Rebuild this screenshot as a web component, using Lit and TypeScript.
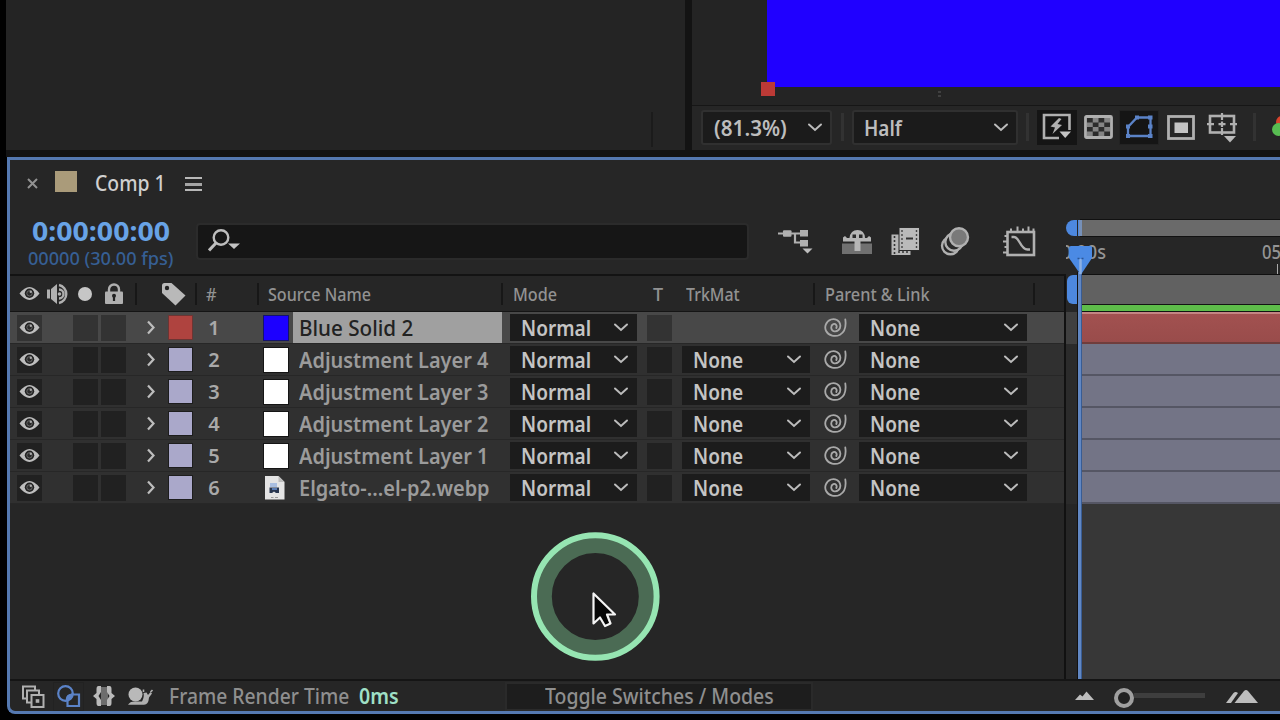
import { LitElement, html, svg, css } from "lit";
import { customElement, property } from "lit/decorators.js";
import { classMap } from "lit/directives/class-map.js";
import { styleMap } from "lit/directives/style-map.js";

/** A single line of text condensed or widened to an exact width. */
@customElement("fit-text")
class FitText extends LitElement {
  @property({ type: Number }) w = 100;
  @property() text = "";
  static styles = css`
    :host { display: block; white-space: nowrap; flex: none; text-align: left; }
    .t { display: inline-block; transform-origin: 0 50%; white-space: pre; }
  `;
  async updated() {
    await document.fonts.ready;
    const t = this.renderRoot.querySelector(".t") as HTMLElement;
    this.style.width = `${this.w}px`;
    t.style.transform = `scaleX(${this.w / t.offsetWidth})`;
  }
  render() {
    return html`<span class="t">${this.text}</span>`;
  }
}

const ft = (text: string, w: number) => html`<fit-text .text=${text} .w=${w}></fit-text>`;
const icon = (w: number, h: number, body: unknown) =>
  html`<svg width=${w} height=${h} viewBox="0 0 ${w} ${h}" fill="none">${body}</svg>`;

const G = "#b0b0b0";
const eye = icon(22, 16, svg`<path d="M0.500 7.500Q5.500 1 10.500 1T20.500 7.500Q15.500 14 10.500 14T0.500 7.500Z" fill="#bdbdbd"/><circle cx="10.500" cy="7.300" r="4.700" fill="#222"/><circle cx="10.500" cy="7.300" r="2.700" fill="#2a2a2a" stroke="#777" stroke-width="0.800"/><circle cx="11.800" cy="5.800" r="1.200" fill="#aaa"/>`);
const speaker = icon(24, 22, svg`<path d="M1 6.500H4V15.500H1ZM5 6L11 1V21L5 16Z" fill=${G}/><path d="M13 6.500A4.500 4.500 0 0 1 13 15.500M13 2A9.200 9.200 0 0 1 13 20" stroke=${G} stroke-width="2.400"/><circle cx="13.500" cy="11" r="1.800" fill=${G}/>`);
const lock = icon(20, 22, svg`<path d="M5 10V6.500A5 5 0 0 1 15 6.500V10" stroke=${G} stroke-width="2.400"/><rect x="1" y="8.500" width="18" height="12.500" rx="1" fill=${G}/><path d="M10 12V18" stroke="#222" stroke-width="2.200"/><circle cx="10" cy="12.800" r="2" fill="#222"/>`);
const tag = icon(26, 24, svg`<path d="M1 3.500Q1 1 3.500 1H10.500L24.500 13.500L14.500 23.500L1 11Z" fill="#b9b9b9"/><circle cx="6" cy="6" r="2.200" fill="#222"/>`);
const chevD = icon(16, 9, svg`<path d="M2 1.500L8 7L14 1.500" stroke="#bcbcbc" stroke-width="2" stroke-linecap="round"/>`);
const chevR = icon(10, 15, svg`<path d="M2 1.500L7.500 7.500L2 13.500" stroke="#bdbdbd" stroke-width="2.200"/>`);
const spiral = icon(24, 22, svg`<path d="M13.300 11C14.500 8.500 12.500 6.300 10.300 7.100C7.500 8.200 7.500 13 10.500 14.100C14.300 15.300 17.800 12 17.300 8C16.700 3.500 12 1.100 8 2.500C3 4.200 1 10 3.100 14C5.500 18.700 12 20.300 17 17.700C21.800 15.100 23.200 9 22.300 2.500" stroke="#a9a9a9" stroke-width="1.800" stroke-linecap="round"/>`);
const webp = icon(20, 25, svg`<path d="M0 1H13.500L19.500 7V24.500H0Z" fill="#e4e4e4"/><path d="M13.500 1V7H19.500Z" fill="#bcbcbc"/><path d="M5 8H12V12H5Z" fill="#a9bee0"/><path d="M4.500 12.500H14V18H11L9 16.500L7 18H4.500Z" fill="#28364f"/><path d="M7 14H12" stroke="#6a93d5" stroke-width="1.500"/><path d="M6 22.500H8.500M10 22.500H13" stroke="#9a9a9a" stroke-width="1.200"/>`);

const fastPrev = icon(30, 28, svg`<path d="M17 25H2V2H27.500V17" stroke=${G} stroke-width="2.600"/><path d="M17 5L8.500 13.500L13 14.500L10.500 21L20 12L15.500 11L19.500 6Z" fill=${G}/><path d="M17.500 18.500H29L23.200 25Z" fill="#c4c4c4"/>`);
const checker = icon(29, 24, svg`<rect x="1.500" y="1.500" width="26" height="21" rx="1" fill="#2c2c2c" stroke=${G} stroke-width="2.800"/>${[0, 1, 2, 3].flatMap((r) => [0, 1, 2, 3].filter((c) => (r + c) % 2 === 1).map((c) => svg`<rect x=${3 + c * 5.75} y=${3 + r * 4.5} width="5.750" height="4.500" fill="#858585"/>`))}`);
const maskIc = icon(29, 26, svg`<g stroke="#5b83c8" stroke-width="2.300"><path d="M12 3.500H25.500V22H3V13Z"/></g><g fill="#5b83c8"><rect x="10" y="1.500" width="4" height="4"/><rect x="23" y="1.500" width="4.500" height="4"/><rect x="23" y="10.500" width="4.500" height="4"/><rect x="23" y="20" width="4.500" height="4"/><rect x="1" y="20" width="4" height="4"/><rect x="1" y="10.500" width="4" height="4"/></g>`);
const region = icon(28, 25, svg`<rect x="1.500" y="1.500" width="25" height="22" stroke=${G} stroke-width="2.800"/><rect x="7.500" y="7.500" width="13.500" height="10.500" fill="#c4c4c4"/>`);
const guides = icon(30, 30, svg`<rect x="3" y="3" width="24" height="16.500" stroke=${G} stroke-width="2.600"/><path d="M15 0V7M15 15V22M0 11.200H7M23 11.200H30M11.500 11.200H18.500M15 8.500V14" stroke=${G} stroke-width="2.200"/><path d="M17 23H29L23 29.500Z" fill="#b9b9b9"/>`);
const rgb = icon(14, 28, svg`<circle cx="11" cy="9" r="6" fill="#d8432c"/><circle cx="7.500" cy="16.500" r="6.500" fill="#58bd52"/>`);

const flow = icon(35, 26, svg`<path d="M0 5.500H30M17 5.500V14.500H24" stroke=${G} stroke-width="2.200"/><rect x="5" y="2.200" width="8.500" height="6.500" rx="1" fill=${G}/><rect x="22" y="2" width="8" height="6.500" fill=${G}/><rect x="22" y="12" width="8" height="6.500" fill=${G}/><path d="M24.500 20.500H34.500L29.500 25.500Z" fill="#bdbdbd"/>`);
const draft = icon(30, 27, svg`<rect x="0" y="15.500" width="30" height="10.500" fill="#707070"/><path d="M1 13.500V9.500L3 8L5 10H7.500Q8.500 2 15.500 2T23 10H25L27 8L29 9.500V13.500H18.500V23H12.500V13.500Z" fill="#b5b5b5"/><rect x="10.500" y="6.500" width="3.500" height="3.500" fill="#292929"/><rect x="17" y="6.500" width="3.500" height="3.500" fill="#292929"/>`);
const blend = icon(29, 29, svg`<rect x="0.500" y="7.500" width="19" height="20.500" fill="#b5b5b5"/><path d="M3.500 9V27M17 25H5" stroke="#333" stroke-width="1.600" stroke-dasharray="2 2"/><rect x="8" y="0.500" width="20.500" height="23" fill="#bababa" stroke="#292929" stroke-width="1"/><path d="M11 3V22M25.500 3V22" stroke="#444" stroke-width="1.400" stroke-dasharray="2 2"/><path d="M15 11.500H22" stroke="#333" stroke-width="1.800"/>`);
const motion = icon(30, 29, svg`<g stroke="#b0b0b0" stroke-width="2.400"><circle cx="10.500" cy="18.800" r="8.500" fill="#292929"/><circle cx="14" cy="15" r="8.700" fill="#292929"/><circle cx="19" cy="10.300" r="9" fill="#797979"/></g>`);
const graph = icon(33, 31, svg`<rect x="4.500" y="6" width="26.500" height="23" stroke=${G} stroke-width="2.600"/><path d="M8 2.500V5M14.500 0.500V5M20 2.500V5M25.500 0.500V5M30.500 2.500V5M1.500 10H4M0 15.500H4M1.500 21H4M0 26.500H4" stroke=${G} stroke-width="2"/><path d="M8.500 11H11C17 11 17 23.500 24.500 23.500H27" stroke=${G} stroke-width="2.400"/>`);

const layersIc = icon(23, 23, svg`<g stroke=${G} stroke-width="2" fill="#242424"><rect x="1" y="1.500" width="12" height="12"/><rect x="5" y="5.500" width="12" height="12"/><rect x="9.500" y="10" width="12" height="12"/></g><rect x="13.700" y="14.200" width="3.600" height="3.600" fill=${G}/>`);
const shapesIc = icon(24, 23, svg`<circle cx="8.500" cy="8.500" r="7.300" stroke="#5b83c8" stroke-width="2.200"/><path d="M14 9.500H22V21H10.500V15" stroke="#5b83c8" stroke-width="2.200"/><path d="M8.500 15.500Q8.500 8.500 15.500 8.500Q15.500 15.500 8.500 15.500Z" fill="#5b83c8"/>`);
const bracesIc = icon(24, 22, svg`<rect x="9" y="2" width="7" height="18" fill="#6d6d6d"/><path d="M9 1H6.500Q4.500 1 4.500 4V8L1 11L4.500 14V18Q4.500 21 6.500 21H9V15L6.500 11L9 7ZM15 1H17.500Q19.500 1 19.500 4V8L23 11L19.500 14V18Q19.500 21 17.500 21H15V15L17.500 11L15 7Z" fill="#bababa"/>`);
const snailIc = icon(25, 19, svg`<circle cx="7.500" cy="7.500" r="7" fill="#b9b9b9"/><path d="M0 17.800Q2 14 8 14.500H14Q16.500 10 15.500 6L18.500 5.500L20 8L22.500 5L24 6.500L21 10.500Q20.500 17.800 16 17.800Z" fill="#b0b0b0"/><path d="M15.500 5V2.500M22.500 5L24.500 3" stroke="#b0b0b0" stroke-width="1.600"/>`);
const smallMt = icon(19, 10, svg`<path d="M0 9L5 3.500L7.500 5.500L11.500 0.500L19 9Z" fill="#bdbdbd"/>`);
const bigMt = icon(32, 15, svg`<path d="M0 14L7.500 4Q9.500 2 12 4L5 14Z" fill="#bdbdbd"/><path d="M8.500 14L18 2Q20 0 22 2L32 14Z" fill="#bdbdbd"/>`);

interface Layer { n: number; name: string; w: number; kind: "solid" | "adj" | "file"; sel?: boolean }
const LAYERS: Layer[] = [
  { n: 1, name: "Blue Solid 2", w: 114, kind: "solid", sel: true },
  { n: 2, name: "Adjustment Layer 4", w: 189, kind: "adj" },
  { n: 3, name: "Adjustment Layer 3", w: 189, kind: "adj" },
  { n: 4, name: "Adjustment Layer 2", w: 189, kind: "adj" },
  { n: 5, name: "Adjustment Layer 1", w: 189, kind: "adj" },
  { n: 6, name: "Elgato-...el-p2.webp", w: 191, kind: "file" },
];

@customElement("app-root")
class AppRoot extends LitElement {
  static styles = css`
    :host { display: block; width: 1280px; height: 720px; overflow: hidden; background: #010101; position: relative;
      font: 500 21px/30px "Noto Sans", "Open Sans", sans-serif; color: #b8b8b8; }
    * { box-sizing: border-box; }
    svg { display: block; flex: none; }
    .page { display: flex; flex-direction: column; height: 714px; padding-left: 6px; }
    .upper { display: flex; height: 157px; padding-bottom: 7px; background: #131313; flex: none; }
    .project { width: 679px; background: #242424; flex: none; display: flex; align-items: flex-end; padding-left: 645px; }
    .project i { width: 2px; height: 35px; margin-bottom: 3px; background: #1b1b1b; }
    .viewer { margin-left: 7px; flex: 1; min-width: 0; background: #242424; display: flex; flex-direction: column; }
    .stage { height: 106px; flex: none; padding-left: 75px; border-bottom: 1px solid #161616; position: relative; }
    .solid { height: 87px; background: #2000ff; }
    .handle { position: absolute; left: 69px; top: 82px; width: 14px; height: 14px; background: #bc3a36; }
    .speck { position: absolute; left: 246px; top: 91px; width: 3px; height: 6px; border-block: 2px solid #404040; }
    .vbar { flex: 1; display: flex; align-items: center; background: #262626; padding: 0 0 2px 9px; }
    .vdrop { height: 35px; border: 2px solid #303030; border-radius: 3px; background: #1b1b1b; display: flex; align-items: center; justify-content: space-between; flex: none; padding: 2px 7px 0 11px; color: #bdbdbd; font-weight: 600; }
    .vdrop svg { margin-top: -1px; }
    .z { width: 131px; } .h { width: 166px; padding-left: 10px; }
    .vsep { width: 3px; height: 28px; background: #323232; flex: none; }
    .s1 { margin: 0 8px 0 9px; } .s2 { margin: 0 8px; } .s3 { margin: 0 15px 0 11px; }
    .vb { width: 40px; height: 35px; display: grid; place-items: center; flex: none; }
    .on { background: #151515; }
    .b1 { margin-right: 1px; } .b3 { width: 40px; border: 1px solid #222; margin: 0 1px; } .b4 { width: 41px; padding-left: 1px; } .b5 { width: 41px; padding-top: 2px; }

    .timeline { flex: 1; margin-left: 1px; min-width: 0; border: solid #5579b1; border-width: 3px 0 3px 3px; border-bottom-left-radius: 8px; background: #262626; display: flex; flex-direction: column; overflow: hidden; }
    .tab { height: 46px; flex: none; display: flex; align-items: center; padding-left: 17px; color: #d0d0d0; }
    .sw { width: 22px; height: 21px; background: #aa9b7a; margin: -4px 18px 0 17px; }
    .menu { width: 17px; height: 14px; margin: 2px 0 0 19px; border-block: 2px solid #b8b8b8; display: flex; align-items: center; }
    .menu i { width: 100%; height: 3px; background: #a5a5a5; }
    .work { flex: 1; display: flex; min-height: 0; }
    .left { width: 1056px; flex: none; display: flex; flex-direction: column; }
    .table { flex: 1; border-right: 2px solid #111; display: flex; flex-direction: column; }
    .tools { height: 70px; flex: none; display: flex; border-bottom: 2px solid #131313; padding-left: 18px; }
    .time { width: 168px; padding-top: 9px; }
    .tc { font-weight: 700; font-size: 26px; line-height: 32px; color: #68a3e6; padding-left: 4px; }
    .fps { font-size: 18px; line-height: 22px; color: #365f94; }
    .search { width: 553px; height: 37px; margin-top: 17px; background: #161616; border: 2px solid #2b2b2b; border-radius: 4px; padding: 4px 0 0 10px; }
    .tico { display: flex; align-items: center; padding: 2px 0 0 29px; }
    .head { height: 36px; flex: none; display: flex; align-items: center; font-size: 18px; color: #929292; padding: 1px 0 0 9px; border-bottom: 1px solid #151515; }
    .dot { width: 14px; height: 14px; border-radius: 50%; background: #c6c6c6; margin: 0 12px 0 8px; }
    .hs { width: 2px; height: 22px; background: #171717; flex: none; }
    .row { display: grid; height: 32px; flex: none; align-items: center; justify-items: end; background: #303030; border-bottom: 1px solid #272727;
      grid-template-columns: 32px 56px 28px 30px 37px 34px 62px 213px 135px 35px 138px 37px 180px; }
    .row.sel { background: #484848; }
    .bx { width: 25px; height: 26px; background: #212121; display: grid; place-items: center; }
    .sel .bx { background: #333; }
    .lab { width: 25px; height: 25px; background: #aaa8ca; border: 1px solid #1d1d1d; }
    .sel .lab { background: #af433f; border-color: #6c3533; }
    .num { width: 26px; text-align: center; font-weight: 600; font-size: 20px; color: #a9a9a9; }
    .src { width: 26px; height: 26px; border: 1px solid #151515; background: #fff; }
    .sel .src { background: #1c00ff; border-color: #13136c; }
    .file { width: 24px; }
    .name { width: 209px; height: 31px; padding-left: 6px; color: #9b9b9b; font-weight: 600; font-size: 21px; line-height: 32px; }
    .sel .name { background: #a0a0a0; color: #222; font-weight: 500; }
    .dd { height: 27px; background: #1c1c1c; display: flex; align-items: center; justify-content: space-between; padding: 0 8px 0 11px; color: #c4c4c4; font-weight: 600; }
    .d1 { width: 127px; } .d2 { width: 128px; } .d3 { width: 168px; }

    .right { flex: 1; min-width: 0; position: relative; display: flex; flex-direction: column; }
    .nav { margin: 13px 0 0 14px; height: 18px; background: #6a6a6a; border-block: 1px solid #111; flex: none; }
    .ruler { height: 37px; flex: none; display: flex; justify-content: space-between; font-size: 19px; font-weight: 500; color: #949494; width: 100%; overflow: hidden; }
    .r0 { margin-left: -5px; } .r5 { margin-right: -9px; }
    .wa { margin-left: 14px; height: 30px; background: #616161; border-top: 1px solid #101010; flex: none; }
    .green { margin-left: 14px; height: 8px; background: #5ebd4a; border-block: 1px solid #131313; flex: none; }
    .lane { display: flex; height: 32px; flex: none; background: #2b2b2b; }
    .bar { margin-left: 14px; flex: 1; background: #737486; border-bottom: 2px solid #555664; }
    .lane.sel { background: #404040; }
    .sel .bar { background: linear-gradient(#a25150, #994c4b); border-top: 2px solid #c38683; border-bottom-color: #703d3c; }
    .rest { flex: 1; margin-left: 14px; background: #373737; }
    .hn { position: absolute; left: 0; top: 14px; width: 11px; height: 16px; border-radius: 8px 0 0 8px; background: #4d88df; }
    .hn2 { position: absolute; left: 12px; top: 14px; width: 4px; height: 16px; background: #7690b8; border-left: 1px solid #4d88df; }
    .hw { position: absolute; left: 1px; top: 69px; width: 10px; height: 29px; border-radius: 6px 0 0 6px; background: #4d88df; }
    .line { position: absolute; left: 11px; top: 66px; bottom: 0; width: 5px; background: #6187c3; border-left: 1px solid #111; border-right: 1px solid #385c94; }
    .ph { position: absolute; left: 3px; top: 40px; }
    .tick { position: absolute; left: 211px; top: 58px; width: 1px; height: 10px; background: #aaa; }

    .foot { height: 32px; flex: none; border-top: 2px solid #151515; display: flex; align-items: center; padding-left: 12px; color: #8f8f8f; font-size: 21px; }
    .fi { margin-left: 8px; width: 31px; height: 29px; display: grid; place-items: center; border: 1px solid #222; }
    .ms { margin-left: 9px; color: #9fe0c6; font-weight: 600; }
    .tog { margin-left: 106px; width: 308px; height: 29px; background: #1d1d1d; border: 2px solid #2a2a2a; display: flex; align-items: center; justify-content: center; }
    .zoom { display: flex; align-items: center; margin-left: 20px; width: 91px; }
    .knob { width: 20px; height: 20px; border-radius: 50%; border: 4px solid #a0a0a0; background: #222; margin-top: 3px; }
    .track { height: 5px; flex: 1; background: #3e3e3e; margin-top: -2px; }
    .ring { position: absolute; left: 531px; top: 532px; }
  `;

  private dd(cls: string, text: string, w: number) {
    return html`<div class="dd ${cls}">${ft(text, w)}${chevD}</div>`;
  }

  private row(l: Layer) {
    return html`<div class=${classMap({ row: true, sel: !!l.sel })}>
      <div class="bx">${eye}</div><div class="bx"></div><div class="bx"></div>
      ${chevR}
      <div class="lab"></div><div class="num">${l.n}</div>
      ${l.kind === "file" ? html`<div class="file">${webp}</div>` : html`<div class="src"></div>`}
      <div class="name">${ft(l.name, l.w)}</div>
      ${this.dd("d1", "Normal", 70)}
      <div class="bx"></div>
      ${l.sel ? html`<div></div>` : this.dd("d2", "None", 50)}
      ${spiral}
      ${this.dd("d3", "None", 50)}
    </div>`;
  }

  private gap(w: number) {
    return html`<span style=${styleMap({ width: `${w}px`, flex: "none" })}></span>`;
  }

  render() {
    return html`
      <div class="page">
        <div class="upper">
          <div class="project"><i></i></div>
          <div class="viewer">
            <div class="stage"><div class="solid"></div><div class="handle"></div><div class="speck"></div></div>
            <div class="vbar">
              <div class="vdrop z">${ft("(81.3%)", 73)}${chevD}</div>
              <div class="vsep s1"></div>
              <div class="vdrop h">${ft("Half", 38)}${chevD}</div>
              <div class="vsep s2"></div>
              <div class="vb on b1">${fastPrev}</div>
              <div class="vb">${checker}</div>
              <div class="vb on b3">${maskIc}</div>
              <div class="vb b4">${region}</div>
              <div class="vb b5">${guides}</div>
              <div class="vsep s3"></div>
              ${rgb}
            </div>
          </div>
        </div>
        <div class="timeline">
          <div class="tab">
            ${icon(11, 11, svg`<path d="M1 1L10 10M10 1L1 10" stroke="#929292" stroke-width="2"/>`)}
            <div class="sw"></div>${ft("Comp 1", 71)}<div class="menu"><i></i></div>
          </div>
          <div class="work">
            <div class="left">
              <div class="tools">
                <div class="time">
                  <div class="tc">${ft("0:00:00:00", 138)}</div>
                  <div class="fps">${ft("00000 (30.00 fps)", 146)}</div>
                </div>
                <div class="search">${icon(34, 24, svg`<circle cx="13" cy="8.500" r="7.300" stroke="#bdbdbd" stroke-width="2.400"/><path d="M8 14L1 21.500" stroke="#bdbdbd" stroke-width="3"/><path d="M20 14.500H32L26 20Z" fill="#c4c4c4"/>`)}</div>
                <div class="tico">${flow}${this.gap(29)}${draft}${this.gap(19)}${blend}${this.gap(20)}${motion}${this.gap(33)}${graph}</div>
              </div>
              <div class="table">
                <div class="head">
                  ${eye}${this.gap(5)}${speaker}<div class="dot"></div>${lock}
                  ${this.gap(11)}<i class="hs"></i>${this.gap(24)}${tag}${this.gap(8)}<i class="hs"></i>${this.gap(9)}${ft("#", 11)}
                  ${this.gap(40)}<i class="hs"></i>${this.gap(9)}${ft("Source Name", 103)}
                  ${this.gap(130)}<i class="hs"></i>${this.gap(10)}${ft("Mode", 44)}${this.gap(96)}${ft("T", 10)}${this.gap(23)}${ft("TrkMat", 54)}
                  ${this.gap(73)}<i class="hs"></i>${this.gap(10)}${ft("Parent & Link", 105)}${this.gap(103)}<i class="hs"></i>
                </div>
                ${LAYERS.map((l) => this.row(l))}
              </div>
            </div>
            <div class="right">
              <div class="nav"></div>
              <div class="ruler"><div class="r0">${ft("0:00s", 45)}</div><div class="r5">${ft("05s", 27)}</div></div>
              <div class="wa"></div>
              <div class="green"></div>
              ${LAYERS.map((l) => html`<div class=${classMap({ lane: true, sel: !!l.sel })}><div class="bar"></div></div>`)}
              <div class="rest"></div>
              <div class="hn"></div><div class="hn2"></div><div class="hw"></div><div class="tick"></div>
              <div class="line"></div>
              <div class="ph">${icon(24, 28, svg`<path d="M0 1.500Q0 0 2 0H21Q23 0 23 1.500V12L13 27H10.500L0 12Z" fill="#4b8ae4"/><path d="M11.500 13V28" stroke="#8cb0e4" stroke-width="2.500"/><path d="M8.500 12.500H14.500" stroke="#2c5695" stroke-width="1.500" stroke-dasharray="2"/>`)}</div>
            </div>
          </div>
          <div class="foot">
            ${layersIc}<div class="fi">${shapesIc}</div>${this.gap(8)}${bracesIc}${this.gap(12)}${snailIc}${this.gap(16)}
            ${ft("Frame Render Time", 180)}${this.gap(1)}<div class="ms">${ft("0ms", 40)}</div>
            <div class="tog">${ft("Toggle Switches / Modes", 229)}</div>
            ${this.gap(262)}${smallMt}
            <div class="zoom"><div class="knob"></div><div class="track"></div></div>
            ${this.gap(21)}${bigMt}
          </div>
        </div>
      </div>
      <div class="ring">${icon(130, 130, svg`<circle cx="64.300" cy="64.500" r="52" stroke="#4b6b54" stroke-width="17"/><circle cx="64.300" cy="64.500" r="61.300" stroke="#96e5b2" stroke-width="6"/><path d="M62.500 61.500V91.500L69 85.500L74 94L79.500 91.500L76 82.500H84Z" fill="#070707" stroke="#f4f4f4" stroke-width="2.200" stroke-linejoin="round"/>`)}</div>
    `;
  }
}
